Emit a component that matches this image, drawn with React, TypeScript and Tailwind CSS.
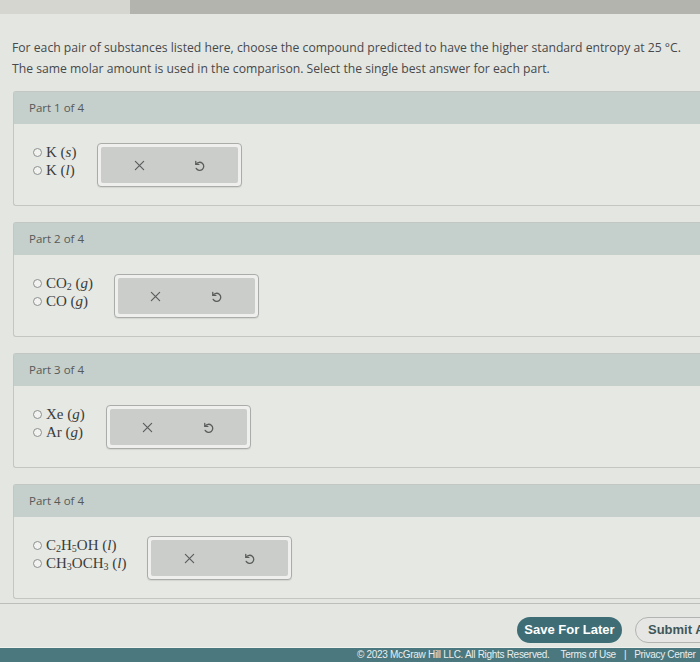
import type { ReactNode } from "react"

type Part = {
  label: string
  options: ReactNode[]
}

const serif = { fontFamily: '"Liberation Serif", "Times New Roman", serif' }
const arial = { fontFamily: '"Liberation Sans", Arial, sans-serif' }

const Sub = ({ children }: { children: ReactNode }) => (
  <sub className="relative top-[2px] text-[10px] leading-none">{children}</sub>
)

const PARTS: Part[] = [
  {
    label: "Part 1 of 4",
    options: [
      <>K (<i>s</i>)</>,
      <>K (<i>l</i>)</>,
    ],
  },
  {
    label: "Part 2 of 4",
    options: [
      <>CO<Sub>2</Sub> (<i>g</i>)</>,
      <>CO (<i>g</i>)</>,
    ],
  },
  {
    label: "Part 3 of 4",
    options: [
      <>Xe (<i>g</i>)</>,
      <>Ar (<i>g</i>)</>,
    ],
  },
  {
    label: "Part 4 of 4",
    options: [
      <>C<Sub>2</Sub>H<Sub>5</Sub>OH (<i>l</i>)</>,
      <>CH<Sub>3</Sub>OCH<Sub>3</Sub> (<i>l</i>)</>,
    ],
  },
]

function UndoIcon() {
  return (
    <svg width="13" height="13" viewBox="0 0 16 16" fill="none" stroke="#5a5d5b" strokeWidth="1.6" strokeLinecap="round" strokeLinejoin="round">
      <path d="M3.9 6.5A5 5 0 1 1 3.9 11.5" />
      <path d="M3.4 2.8v3.9h3.8" />
    </svg>
  )
}

function CloseIcon() {
  return (
    <svg width="11" height="11" viewBox="0 0 12 12" fill="none" stroke="#5a5d5b" strokeWidth="1.3" strokeLinecap="round">
      <path d="M1.5 1.5l9 9M10.5 1.5l-9 9" />
    </svg>
  )
}

function PartPanel({ part }: { part: Part }) {
  return (
    <div className="ml-[13px] rounded-l-[3px] border border-r-0 border-[#c3c7c3] bg-[#e6e8e4]">
      <div className="flex h-[32px] items-center bg-[#c5cfcb] px-[15px] text-[11.5px] text-[#555a58]">
        {part.label}
      </div>
      <div className="flex items-start gap-[21px] pb-[18px] pl-[19px] pt-[19px]">
        <div className="flex flex-col text-[15px] leading-[18px] text-[#3a3c3b]" style={serif}>
          {part.options.map((option, index) => (
            <label key={index} className="flex items-center gap-[4px]">
              <span className="h-[9px] w-[9px] rounded-full border border-[#8d908e] bg-[#f2f3f1]" />
              <span>{option}</span>
            </label>
          ))}
        </div>
        <div className="rounded-[4px] border border-[#a9aca9] bg-[#eff0ee] p-[3px] shadow-[0_1px_1px_rgba(0,0,0,0.08)]">
          <div className="flex h-[36px] w-[137px] items-center justify-around rounded-[2px] bg-[#cacdca] px-[8px]">
            <CloseIcon />
            <UndoIcon />
          </div>
        </div>
      </div>
    </div>
  )
}

export default function App() {
  return (
    <div
      className="flex h-[662px] w-[700px] flex-col overflow-hidden bg-[#e4e6e2]"
      style={{ fontFamily: '"Open Sans", "Noto Sans", sans-serif' }}
    >
      <div className="flex h-[14px] shrink-0">
        <div className="w-[130px] bg-[#d6d6d1]" />
        <div className="flex-1 bg-[#b3b4ae]" />
      </div>

      <p className="shrink-0 px-[12px] pt-[23px] text-[12.2px] leading-[21px] text-[#47494a]">
        For each pair of substances listed here, choose the compound predicted to have the higher standard entropy at 25 °C.
        <br />
        The same molar amount is used in the comparison. Select the single best answer for each part.
      </p>

      <div className="mt-[12px] flex shrink-0 flex-col gap-[16px]">
        {PARTS.map((part) => (
          <PartPanel key={part.label} part={part} />
        ))}
      </div>

      <div className="mt-[4px] h-px shrink-0 bg-[#bbbfbb]" />

      <div className="flex h-[43px] shrink-0 items-start justify-end gap-[13px] pt-[13px]">
        <button
          type="button"
          className="h-[26px] w-[105px] shrink-0 rounded-full bg-[#3e6d75] text-[13px] font-bold text-white"
          style={arial}
        >
          Save For Later
        </button>
        <button
          type="button"
          className="mr-[-50px] h-[26px] w-[115px] shrink-0 rounded-full border border-[#b1b4b1] bg-[#e6e7e4] pl-[12px] text-left text-[13px] font-bold text-[#40575a]"
          style={arial}
        >
          Submit Answer
        </button>
      </div>

      <div className="h-px shrink-0 bg-[#f0f2ef]" />
      <div
        className="flex-1 whitespace-nowrap bg-[#4b787e] pl-[357px] pt-[1px] text-[10px] leading-[12px] tracking-[-0.3px] text-[#e8eeee]"
        style={arial}
      >
        © 2023 McGraw Hill LLC. All Rights Reserved.
        <span className="ml-[11px]">Terms of Use</span>
        <span className="mx-[8px]">|</span>
        <span>Privacy Center</span>
      </div>
    </div>
  )
}
